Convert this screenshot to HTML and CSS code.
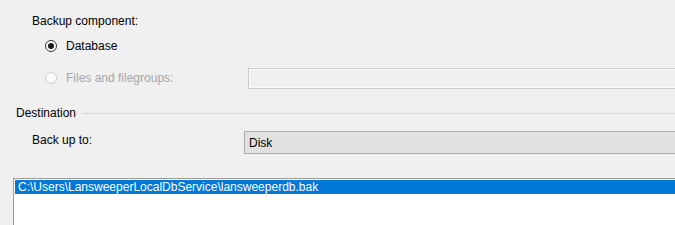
FILE: index.html
```html
<!DOCTYPE html>
<html>
<head>
<meta charset="utf-8">
<link rel="stylesheet" href="styles.css">
</head>
<body>
<div class="page">
  <div class="group-label">Backup component:</div>
  <div class="options">
    <div class="opt-row">
      <span class="radio checked"></span>
      <span class="opt-text">Database</span>
    </div>
    <div class="opt-row">
      <span class="radio disabled"></span>
      <span class="opt-text disabled-text">Files and filegroups:</span>
      <div class="textbox"></div>
    </div>
  </div>
  <div class="section-head">
    <span class="section-title">Destination</span>
    <span class="section-rule"></span>
  </div>
  <div class="dest-row">
    <span class="dest-label">Back up to:</span>
    <div class="combo">Disk</div>
  </div>
  <div class="listbox">
    <div class="list-item selected">C:\Users\LansweeperLocalDbService\lansweeperdb.bak</div>
  </div>
</div>
</body>
</html>
```
FILE: styles.css
```css
html, body {
  margin: 0;
  padding: 0;
  background: #f0f0f0;
  overflow: hidden;
}
body {
  width: 675px;
  height: 225px;
  font-family: "Liberation Sans", Arial, sans-serif;
  font-size: 12px;
  line-height: 15px;
  color: #000;
}
.page {
  box-sizing: border-box;
  width: 675px;
  height: 225px;
  padding-top: 14px;
  display: flex;
  flex-direction: column;
}
.group-label {
  padding-left: 32px;
  height: 15px;
}
.options {
  margin-top: 6px;
  padding-left: 45px;
  display: flex;
  flex-direction: column;
  gap: 10px;
}
.opt-row {
  display: flex;
  align-items: center;
  height: 22px;
}
.radio {
  box-sizing: border-box;
  width: 12px;
  height: 12px;
  border-radius: 50%;
  border: 1px solid #333;
  background: #fff;
  display: flex;
  align-items: center;
  justify-content: center;
  margin-right: 9px;
  flex: none;
}
.radio.checked::after {
  content: "";
  width: 6px;
  height: 6px;
  border-radius: 50%;
  background: #1a1a1a;
}
.radio.disabled {
  border-color: #cccccc;
  background: #fbfbfb;
}
.opt-text {
  white-space: nowrap;
}
.disabled-text {
  color: #a6a6a6;
  width: 182px;
}
.textbox {
  box-sizing: border-box;
  height: 21px;
  flex: 1;
  border: 1px solid #cccccc;
  border-right: none;
  background: #f0f0f0;
  box-shadow: inset 1px 1px 0 #fafafa, inset 0 -1px 0 #fafafa;
}
.section-head {
  margin-top: 17px;
  padding-left: 16px;
  display: flex;
  align-items: center;
  height: 15px;
}
.section-title {
  margin-right: 6px;
}
.section-rule {
  flex: 1;
  height: 1px;
  background: #d8d8d8;
}
.dest-row {
  margin-top: 10px;
  padding-left: 32px;
  display: flex;
  align-items: flex-start;
}
.dest-label {
  width: 212px;
  margin-top: 2px;
}
.combo {
  box-sizing: border-box;
  flex: 1;
  height: 23px;
  border: 1px solid #adadad;
  border-right: none;
  background: #e1e1e1;
  padding: 4px 0 2px 4px;
}
.listbox {
  flex: 1;
  margin-top: 24px;
  margin-left: 13px;
  border-top: 1px solid #9a9a9a;
  border-left: 1px solid #9a9a9a;
  padding: 1px 0 0 1px;
  background: #fff;
}
.list-item {
  height: 14px;
  line-height: 15px;
  padding-left: 3px;
  white-space: nowrap;
}
.list-item.selected {
  background: #0078d7;
  color: #fff;
}
```
